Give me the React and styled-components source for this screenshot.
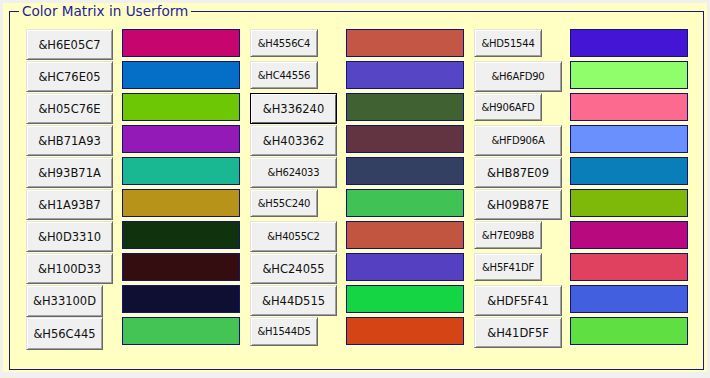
import React from 'react'
import styled, { createGlobalStyle } from 'styled-components'

const Global = createGlobalStyle`
  html, body {
    margin: 0;
    padding: 0;
    background: #f0f0f0;
  }
  body {
    font-family: "DejaVu Sans", Tahoma, sans-serif;
  }
`

const Form = styled.div`
  width: 704px;
  height: 369px;
  margin: 3px 0 0 3px;
  padding: 0 0 0 6px;
  box-sizing: border-box;
  background: #ffffc4;
`

const Frame = styled.fieldset`
  width: 695px;
  height: 367px;
  margin: 0;
  padding: 9px 0 0 0;
  box-sizing: border-box;
  border: 1px solid #1a1a7e;
`

const Title = styled.legend`
  margin-left: 9px;
  padding: 0 3px;
  color: #2121a0;
  font-size: 13.6px;
  line-height: 17px;
`

const Matrix = styled.div`
  display: grid;
  grid-template-columns: 96px 128px 96px 128px 96px 118px;
  grid-auto-rows: 32px;
  margin-left: 16px;
`

const CodeButton = styled.button`
  align-self: start;
  width: ${p => p.$w}px;
  height: ${p => p.$h}px;
  padding: 0;
  box-sizing: border-box;
  background: #f0f0f0;
  color: #111;
  font-family: "DejaVu Sans", Tahoma, sans-serif;
  font-size: ${p => (p.$big ? '11.5px' : '10px')};
  letter-spacing: ${p => (p.$big ? '0' : '-0.2px')};
  text-align: center;
  border: 1px solid;
  border-color: ${p =>
    p.$focus ? '#000 #000 #000 #000' : '#e3e3e3 #696969 #696969 #e3e3e3'};
  box-shadow: ${p =>
    p.$focus
      ? 'inset 1px 1px 0 #fff, inset -1px -1px 0 #696969'
      : 'inset 1px 1px 0 #fff, inset -1px -1px 0 #a0a0a0'};
`

const Swatch = styled.div`
  width: 118px;
  height: 28px;
  box-sizing: border-box;
  border: 1px solid #13137a;
  background: ${p => p.$color};
`

// VBA colour literals are &HBBGGRR
const toCss = code => {
  const hex = code.slice(2).padStart(6, '0')
  return '#' + hex.slice(4, 6) + hex.slice(2, 4) + hex.slice(0, 2)
}

const B = (code, w, h, big, focus) => ({ code, w, h, big, focus })

const columns = [
  [
    B('&H6E05C7', 87, 31, true),
    B('&HC76E05', 87, 31, true),
    B('&H05C76E', 87, 31, true),
    B('&HB71A93', 87, 31, true),
    B('&H93B71A', 87, 31, true),
    B('&H1A93B7', 87, 31, true),
    B('&H0D3310', 87, 31, true),
    B('&H100D33', 87, 31, true),
    B('&H33100D', 77, 32, true),
    B('&H56C445', 77, 33, true),
  ],
  [
    B('&H4556C4', 68, 28),
    B('&HC44556', 68, 28),
    B('&H336240', 87, 31, true, true),
    B('&H403362', 87, 31, true),
    B('&H624033', 87, 31),
    B('&H55C240', 68, 28),
    B('&H4055C2', 87, 31),
    B('&HC24055', 87, 31, true),
    B('&H44D515', 87, 31, true),
    B('&H1544D5', 68, 29),
  ],
  [
    B('&HD51544', 68, 28),
    B('&H6AFD90', 88, 31),
    B('&H906AFD', 68, 28),
    B('&HFD906A', 88, 31),
    B('&HB87E09', 88, 31, true),
    B('&H09B87E', 88, 31, true),
    B('&H7E09B8', 68, 28),
    B('&H5F41DF', 68, 28),
    B('&HDF5F41', 88, 31, true),
    B('&H41DF5F', 88, 31, true),
  ],
]

function App() {
  const cells = []
  for (let r = 0; r < 10; r++) {
    columns.forEach((col, c) => {
      const b = col[r]
      cells.push(
        <CodeButton key={`b${r}-${c}`} $w={b.w} $h={b.h} $big={b.big} $focus={b.focus}>
          {b.code}
        </CodeButton>
      )
      cells.push(<Swatch key={`s${r}-${c}`} $color={toCss(b.code)} />)
    })
  }

  return (
    <>
      <Global />
      <Form>
        <Frame>
          <Title>Color Matrix in Userform</Title>
          <Matrix>{cells}</Matrix>
        </Frame>
      </Form>
    </>
  )
}

export default App
